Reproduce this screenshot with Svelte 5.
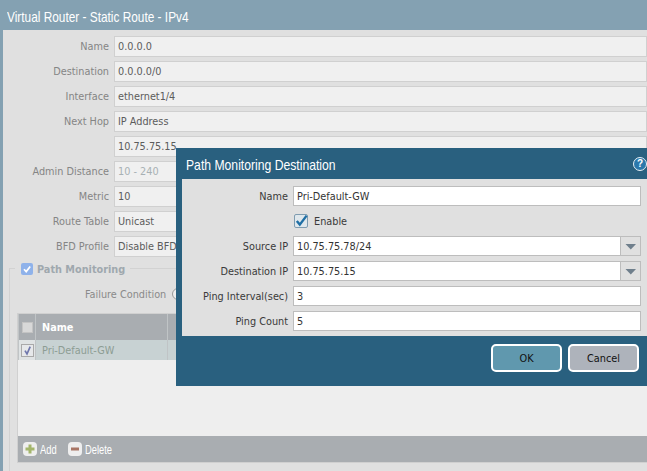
<script>
  const rows = [
    { label: 'Name', value: '0.0.0.0' },
    { label: 'Destination', value: '0.0.0.0/0' },
    { label: 'Interface', value: 'ethernet1/4' },
    { label: 'Next Hop', value: 'IP Address' },
    { label: '', value: '10.75.75.15' },
    { label: 'Admin Distance', value: '10 - 240', muted: true },
    { label: 'Metric', value: '10' },
    { label: 'Route Table', value: 'Unicast' },
    { label: 'BFD Profile', value: 'Disable BFD' }
  ];
  const fields = [
    { label: 'Name', value: 'Pri-Default-GW' },
    { check: true },
    { label: 'Source IP', value: '10.75.75.78/24', combo: true },
    { label: 'Destination IP', value: '10.75.75.15', combo: true },
    { label: 'Ping Interval(sec)', value: '3' },
    { label: 'Ping Count', value: '5' }
  ];
</script>

<div class="window">
  <div class="title"><span>Virtual Router - Static Route - IPv4</span></div>
  <div class="panel">
    <div class="form">
      {#each rows as r}
        <div class="row">
          <span class="label">{r.label}</span>
          <span class="input" class:muted={r.muted}>{r.value}</span>
        </div>
      {/each}
    </div>
    <div class="fieldset">
      <div class="legend">
        <span class="legend-check"><svg viewBox="0 0 12 12" width="12" height="12"><path d="M3 6.2 5.2 8.6 9.2 3.4" fill="none" stroke="#fff" stroke-width="1.7"/></svg></span>
        <span class="legend-text">Path Monitoring</span>
      </div>
      <div class="failure"><span>Failure Condition</span><span class="radio"></span></div>
      <div class="grid">
        <div class="ghead">
          <span class="gcheck"><span class="box"></span></span>
          <span class="gname">Name</span>
        </div>
        <div class="grow">
          <span class="gcheck"><span class="box tick"><svg viewBox="0 0 13 13" width="13" height="13"><path d="M4 6.6 6 10 9.2 2.6" fill="none" stroke="#6f77ad" stroke-width="1.7"/></svg></span></span>
          <span class="gname">Pri-Default-GW</span>
        </div>
        <div class="gbody"></div>
        <div class="gfoot">
          <span class="ic"><svg viewBox="0 0 14 14" width="14" height="14"><path d="M7 2.5v9M2.5 7h9" stroke="#a3b56b" stroke-width="3"/></svg></span>
          <span class="actl">Add</span>
          <span class="ic del"><svg viewBox="0 0 14 14" width="14" height="14"><path d="M3 7h8" stroke="#a87565" stroke-width="3"/></svg></span>
          <span class="actl">Delete</span>
        </div>
      </div>
    </div>
  </div>

  <div class="modal">
    <div class="mtitle">
      <span class="mtext">Path Monitoring Destination</span>
      <span class="help">?</span>
    </div>
    <div class="mbody">
      {#each fields as f}
        <div class="mrow">
          <span class="mlabel">{f.label ?? ''}</span>
          {#if f.check}
            <span class="enable">
              <span class="ecb"><svg viewBox="0 0 14 14" width="14" height="14"><path d="M2.8 7 5.8 10.6 12.6 1.6" fill="none" stroke="#1f6fa5" stroke-width="2.4"/></svg></span>
              Enable
            </span>
          {:else}
            <span class="minput">
              <span class="mval">{f.value}</span>
              {#if f.combo}<span class="drop"><svg viewBox="0 0 12 7" width="12" height="7"><path d="M0.5 1h10.5L5.8 6.5z" fill="#6f7f8c"/></svg></span>{/if}
            </span>
          {/if}
        </div>
      {/each}
    </div>
    <div class="mfoot">
      <span class="btn ok">OK</span>
      <span class="btn cancel">Cancel</span>
    </div>
  </div>
</div>

<style>
  :global(body) { margin: 0; background: #84a1b2; overflow: hidden; }
  .window {
    position: relative; width: 647px; height: 471px; overflow: hidden;
    font-family: "DejaVu Sans Condensed", "DejaVu Sans", sans-serif; font-size: 10.8px;
  }
  .title { height: 30px; padding-left: 7px; color: #fff; font: 15px/33px "Liberation Sans", sans-serif; }
  .title span { display: inline-block; transform: scaleX(.79); transform-origin: left; white-space: nowrap; }
  .panel { margin-left: 3px; height: 441px; background: #e0e0e0; padding-top: 6px; box-sizing: border-box; }
  .form { display: flex; flex-direction: column; gap: 4px; }
  .row { display: flex; align-items: center; height: 21px; }
  .label { width: 106px; text-align: right; color: #858585; }
  .input {
    margin-left: 5px; flex: 1; height: 21px; box-sizing: border-box; line-height: 20px;
    padding-left: 3px; background: #f0f0f0; border: 1px solid #d0d0d0; color: #5c5c5c;
  }
  .input.muted { color: #a8b0b4; }
  .fieldset { margin: 11px 0 0 6px; border: 1px solid #d2d2d2; border-right: 0; position: relative; height: 210px; padding: 0 0 0 7px; }
  .legend {
    position: absolute; left: 5px; top: -8px; padding: 0 5px 0 6px; background: #e0e0e0; display: flex; align-items: center;
    gap: 4px; color: #9fa8ae; font-weight: bold; height: 16px;
  }
  .legend-check { width: 12px; height: 12px; background: #8fb2ea; border-radius: 2px; display: block; }
  .legend-text { padding-top: 1px; }
  .failure { display: flex; align-items: center; gap: 6px; height: 16px; margin-top: 17px; padding-left: 68px; color: #8a8a8a; }
  .radio { width: 10px; height: 10px; border: 1px solid #999; border-radius: 50%; background: #eee; }
  .grid { margin-top: 11px; height: 148px; display: flex; flex-direction: column; border: 1px solid #d0d0d0; border-right: 0; background: #eee; }
  .ghead { height: 26px; flex: none; background: #a9adb1; display: flex; align-items: center; color: #fff; font-weight: bold; }
  .grow { height: 20px; flex: none; background: #c8d2d3; display: flex; align-items: center; color: #8d9d93; }
  .gcheck { width: 18px; box-sizing: border-box; align-self: stretch; display: flex; align-items: center; justify-content: center; border-right: 1px solid #c0c4c6; border-left: 1px solid #c0c4c6; }
  .grow .gcheck { background: #dfe3e4; }
  .gname { padding-left: 6px; box-sizing: border-box; flex: 0 0 132px; height: 100%; display: flex; align-items: center; border-right: 1px solid #c0c4c6; }
  .box { width: 11px; height: 11px; box-sizing: border-box; background: #d8d8d8; border: 1px solid #c4c4c4; display: block; }
  .box.tick { width: 13px; height: 13px; background: #e6e8ea; border-color: #a9a9a9; }
  .box.tick svg { display: block; margin: -1px; }
  .gbody { flex: 1; }
  .gfoot { height: 26px; flex: none; background: #a9adb1; display: flex; align-items: center; padding-left: 5px; color: #fff; font: 13px "Liberation Sans", sans-serif; }
  .ic { width: 14px; height: 14px; background: #eee; border-radius: 4px; display: block; margin-right: 3px; }
  .ic.del { margin-left: 11px; }
  .actl { display: inline-block; width: 17px; transform: scaleX(.72); transform-origin: left; }
  .modal { position: absolute; left: 176px; top: 148px; width: 471px; height: 238px; background: #29607f; display: flex; flex-direction: column; color: #3a3a3a; }
  .mtitle { height: 31px; flex: none; display: flex; align-items: center; justify-content: space-between; color: #fff; padding-left: 10px; font: 14.5px "Liberation Sans", sans-serif; }
  .mtext { display: inline-block; transform: scaleX(.84); transform-origin: left; white-space: nowrap; padding-top: 3px; }
  .help { width: 12px; height: 12px; border-radius: 50%; background: #2b78ab; border: 1.5px solid #e8f0f5; font: bold 10px "Liberation Sans", sans-serif; color: #fff; text-align: center; line-height: 12px; margin-top: 1px; }
  .mbody { margin-left: 6px; height: 157px; flex: none; background: #e0e0e0; padding-top: 7px; box-sizing: border-box; display: flex; flex-direction: column; gap: 5px; }
  .mrow { display: flex; align-items: center; height: 20px; }
  .mlabel { width: 106px; text-align: right; }
  .enable { margin-left: 6px; display: flex; align-items: center; gap: 6px; padding-top: 1px; }
  .ecb { width: 12px; height: 12px; border: 1px solid #7f9cb0; border-radius: 2px; background: #dfe7ec; display: block; margin-top: -2px; }
  .ecb svg { display: block; margin: -1px 0 0 -1px; overflow: visible; }
  .minput { margin-left: 5px; width: 348px; height: 20px; box-sizing: border-box; background: #fff; border: 1px solid #bdbdbd; display: flex; line-height: 19px; color: #333; }
  .mval { flex: 1; padding-left: 3px; }
  .drop { width: 19px; background: #e0e0e0; border-left: 1px solid #bdbdbd; display: flex; align-items: center; justify-content: center; }
  .mfoot { flex: 1; display: flex; justify-content: flex-end; gap: 6px; padding: 8px 8px 0 0; }
  .btn { width: 67px; height: 24px; border: 2px solid #fff; border-radius: 5px; display: flex; align-items: center; justify-content: center; color: #111; }
  .ok { background: #6098ae; }
  .cancel { background: #aeb3bb; }
</style>
